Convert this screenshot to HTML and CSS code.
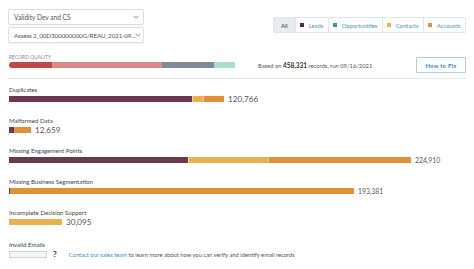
FILE: index.html
```html
<!DOCTYPE html>
<html lang="en">
<head>
  <meta charset="UTF-8">
  <title>Record Quality</title>
  <link rel="stylesheet" href="styles.css">
</head>
<body>
  <div class="page">
    <div class="top">
      <div class="selects">
        <div class="select">
          <span>Validity Dev and CS</span>
          <svg class="chev" viewBox="0 0 8 5" width="6" height="4"><path d="M1 1l3 3 3-3" fill="none" stroke="#777" stroke-width="1.1"/></svg>
        </div>
        <div class="select">
          <span class="tight">Assess 2_00D300000000G/REAU_2021-09...</span>
          <svg class="chev" viewBox="0 0 8 5" width="6" height="4"><path d="M1 1l3 3 3-3" fill="none" stroke="#777" stroke-width="1.1"/></svg>
        </div>
      </div>
      <div class="filters">
        <div class="filter active">All</div>
        <div class="filter"><i class="sq leads"></i>Leads</div>
        <div class="filter"><i class="sq opps"></i>Opportunities</div>
        <div class="filter"><i class="sq contacts"></i>Contacts</div>
        <div class="filter"><i class="sq accounts"></i>Accounts</div>
      </div>
    </div>

    <div class="quality">
      <div class="quality-left">
        <div class="caption">RECORD QUALITY</div>
        <div class="qbar">
          <span class="q1" style="width:43px"></span>
          <span class="q2" style="width:110px"></span>
          <span class="q3" style="width:52px"></span>
          <span class="q4" style="width:21px"></span>
        </div>
      </div>
      <div class="based">Based on <b>458,331</b> records, run 09/16/2021</div>
      <button class="fix">How to Fix</button>
    </div>

    <div class="metrics">
      <div class="metric">
        <div class="label">Duplicates</div>
        <div class="row">
          <div class="bar">
            <span class="dark" style="width:183px"></span>
            <span class="light" style="width:11px"></span>
            <span class="orange" style="width:21px"></span>
          </div>
          <span class="value big">120,766</span>
        </div>
      </div>
      <div class="metric">
        <div class="label">Malformed Data</div>
        <div class="row">
          <div class="bar">
            <span class="dark" style="width:5px"></span>
            <span class="orange" style="width:17px"></span>
          </div>
          <span class="value big">12,659</span>
        </div>
      </div>
      <div class="metric">
        <div class="label">Missing Engagement Points</div>
        <div class="row">
          <div class="bar">
            <span class="dark" style="width:179px"></span>
            <span class="light" style="width:80px"></span>
            <span class="orange" style="width:143px"></span>
          </div>
          <span class="value">224,910</span>
        </div>
      </div>
      <div class="metric">
        <div class="label">Missing Business Segmentation</div>
        <div class="row">
          <div class="bar">
            <span class="dark" style="width:1px"></span>
            <span class="orange" style="width:344px"></span>
          </div>
          <span class="value">193,381</span>
        </div>
      </div>
      <div class="metric">
        <div class="label">Incomplete Decision Support</div>
        <div class="row">
          <div class="bar">
            <span class="light" style="width:53px"></span>
          </div>
          <span class="value big">30,095</span>
        </div>
      </div>
      <div class="metric emails">
        <div class="label">Invalid Emails</div>
        <div class="row">
          <div class="empty"></div>
          <span class="value big q">?</span>
          <span class="note"><a href="#">Contact our sales team</a> to learn more about how you can verify and identify email records</span>
        </div>
      </div>
    </div>
  </div>
</body>
</html>
```

FILE: styles.css
```css
body {
  margin: 0;
  font-family: Lato, "Open Sans", sans-serif;
  color: #444;
  background: #fff;
}

.page {
  width: 458px;
  padding: 9px 8px 0 8px;
  overflow: hidden;
}

.top {
  display: flex;
  justify-content: space-between;
  align-items: flex-start;
}

.selects {
  display: flex;
  flex-direction: column;
  gap: 2px;
}

.select {
  width: 125px;
  height: 14px;
  padding: 0 4px 0 5px;
  border: 1px solid #dedede;
  border-radius: 2px;
  box-shadow: 0 1px 1px rgba(0, 0, 0, 0.05);
  display: flex;
  align-items: center;
  justify-content: space-between;
  font-size: 6.6px;
  color: #555;
  white-space: nowrap;
}

.select .tight {
  font-size: 6.3px;
  letter-spacing: -0.15px;
}

.chev {
  display: block;
  flex-shrink: 0;
}

.filters {
  margin-top: 8px;
  display: flex;
  border: 1px solid #e2e6ea;
  border-radius: 2px;
  height: 14px;
}

.filter {
  display: flex;
  align-items: center;
  padding: 0 4.5px;
  font-size: 5.8px;
  color: #4a93c6;
  border-left: 1px solid #e2e6ea;
}

.filter:first-child {
  border-left: none;
}

.filter.active {
  background: #e8ebef;
  color: #333;
  padding: 0 7px;
}

.sq {
  display: inline-block;
  width: 4px;
  height: 4px;
  margin-right: 4.5px;
}

.sq.leads { background: #4d2f3c; }
.sq.opps { background: #3d8fc1; }
.sq.contacts { background: #e9b552; }
.sq.accounts { background: #e0913a; }

.quality {
  display: flex;
  align-items: flex-end;
  margin-top: 11px;
  padding-bottom: 3px;
  border-bottom: 1px solid #e8e8e8;
  padding-left: 1px;
}

.caption {
  font-size: 4.8px;
  color: #888;
  letter-spacing: 0.1px;
  margin-bottom: 2px;
}

.qbar {
  display: flex;
  height: 6px;
  margin-bottom: 7px;
}

.qbar span {
  display: block;
  height: 100%;
}

.qbar .q1 {
  background: #c04846;
  border-radius: 3px 0 0 3px;
}
.qbar .q2 { background: #db8a88; }
.qbar .q3 { background: #7f8b98; }
.qbar .q4 { background: #a9ddcc; }

.based {
  margin-left: 23px;
  margin-bottom: 6px;
  font-size: 5.8px;
  color: #555;
  flex: 1;
}

.based b {
  font-size: 6.5px;
  color: #333;
}

.fix {
  width: 50px;
  height: 16px;
  background: #fff;
  border: 1px solid #a7d3e8;
  border-radius: 1px;
  color: #3a85b8;
  font-family: inherit;
  font-weight: bold;
  font-size: 5.8px;
  letter-spacing: 0.3px;
  padding: 0;
  margin-bottom: 2px;
}

.metrics {
  padding-top: 7px;
  padding-left: 1px;
}

.metric {
  margin-bottom: 12.7px;
}

.metric.emails {
  padding-top: 2px;
}

.label {
  font-size: 6.1px;
  line-height: 8px;
  color: #444;
}

.row {
  display: flex;
  align-items: center;
  height: 10px;
}

.bar {
  display: flex;
  height: 6px;
}

.bar span {
  display: block;
  height: 100%;
}

.bar .dark { background: #6a3a4c; }
.bar .light { background: #e8b14e; border-left: 1px solid #f3d9a5; box-sizing: border-box; }
.bar .light:first-child { border-left: none; }
.bar .orange { background: #e0913a; border-left: 1px solid #f0c08a; box-sizing: border-box; }
.bar .dark + .orange { border-left: none; }

.value {
  margin-left: 4px;
  font-size: 6.8px;
  color: #555;
}

.value.big {
  font-size: 8.2px;
}

.empty {
  width: 36px;
  height: 5px;
  border: 1px solid #cfd4d8;
  background: #f3f5f6;
}

.value.q {
  margin-left: 6px;
  font-weight: bold;
  color: #333;
}

.note {
  margin-left: 12px;
  font-size: 5.8px;
  color: #555;
  white-space: nowrap;
}

.note a {
  color: #3a8fc8;
  text-decoration: none;
}
```
